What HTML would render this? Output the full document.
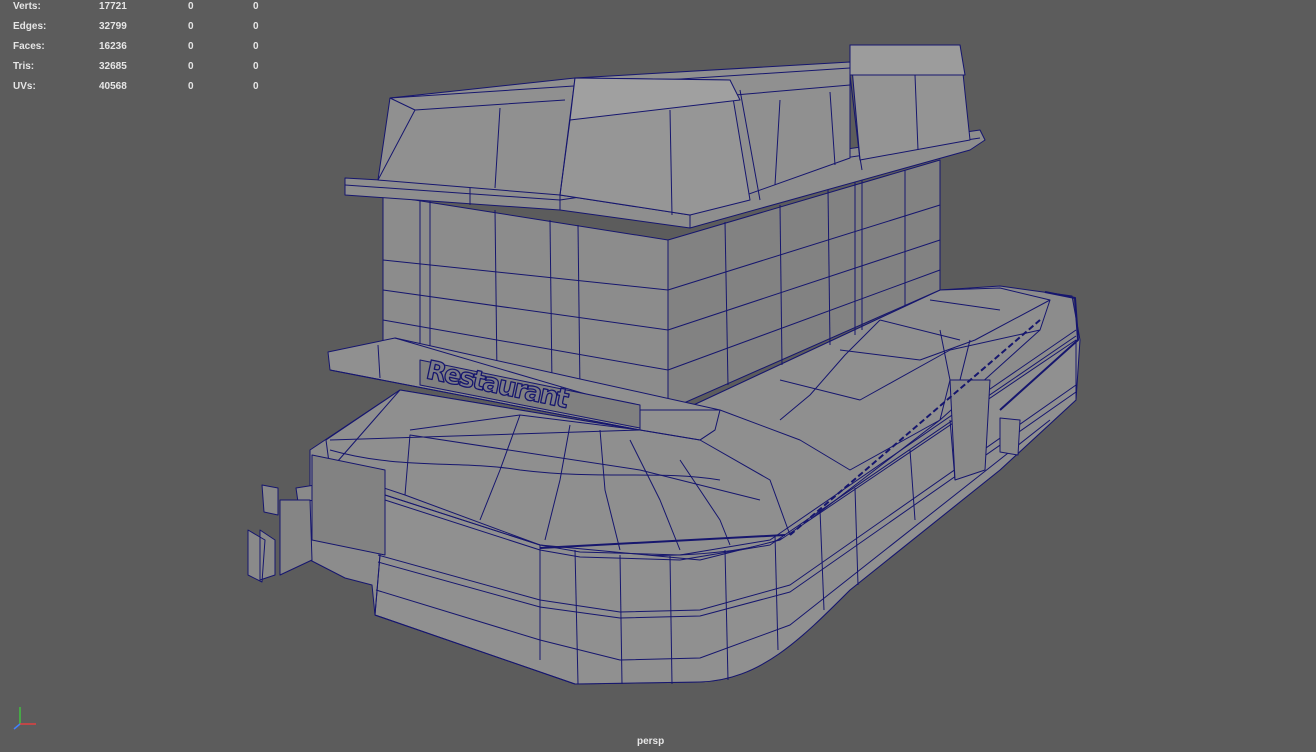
<!DOCTYPE html>
<html><head><meta charset="utf-8"><style>
html,body{margin:0;padding:0;background:#5c5c5c;width:1316px;height:752px;overflow:hidden;font-family:"Liberation Sans",sans-serif}
.st{position:absolute;color:#e6e6e6;font-size:10px;font-weight:bold}
</style></head><body>
<div class="st" style="left:13px;top:1px">Verts:</div><div class="st" style="left:99px;top:1px">17721</div><div class="st" style="left:188px;top:1px">0</div><div class="st" style="left:253px;top:1px">0</div>
<div class="st" style="left:13px;top:21px">Edges:</div><div class="st" style="left:99px;top:21px">32799</div><div class="st" style="left:188px;top:21px">0</div><div class="st" style="left:253px;top:21px">0</div>
<div class="st" style="left:13px;top:41px">Faces:</div><div class="st" style="left:99px;top:41px">16236</div><div class="st" style="left:188px;top:41px">0</div><div class="st" style="left:253px;top:41px">0</div>
<div class="st" style="left:13px;top:61px">Tris:</div><div class="st" style="left:99px;top:61px">32685</div><div class="st" style="left:188px;top:61px">0</div><div class="st" style="left:253px;top:61px">0</div>
<div class="st" style="left:13px;top:81px">UVs:</div><div class="st" style="left:99px;top:81px">40568</div><div class="st" style="left:188px;top:81px">0</div><div class="st" style="left:253px;top:81px">0</div>
<div class="st" style="left:637px;top:736px">persp</div>
<svg width="1316" height="752" style="position:absolute;left:0;top:0" stroke="#16166e" stroke-width="1" stroke-linejoin="round">
<path d="M310,450 L400,390 L640,430 L940,290 L1000,286 L1072,296 L1080,340 L1076,400 L1000,470 L850,590 C800,640 760,680 700,682 L575,684 L375,615 L372,585 L345,578 L310,560 Z" fill="#8c8c8c"/>
<path d="M326,440 L400,390 L640,430 L940,290 L1000,288 L1050,300 L1040,330 L940,420 L790,535 C760,550 700,558 600,555 L540,545 L405,495 L330,470 Z" fill="#8f8f8f"/>
<path d="M385,495 L540,545 L700,560 L780,540 L1076,340 L1076,400 L1000,470 L850,590 C800,640 760,680 700,682 L575,684 L375,615 Z" fill="#909090"/>
<g fill="none">
<path d="M378,555 L540,600 L620,612 L700,610 L790,585 L1076,385"/>
<path d="M378,562 L540,607 L620,618 L700,616 L790,592 L1076,392"/>
<path d="M376,590 L540,640 L620,660 L700,658 L790,625 L1050,420"/>
<path d="M385,495 L540,545 L580,552 L680,555 L770,540 L1076,330"/>
<path d="M385,500 L540,550 L580,557 L680,560 L770,545 L1076,336"/>
<path d="M375,615 L575,684"/><path d="M385,495 L375,615"/>
<path d="M540,545 L540,660"/><path d="M575,550 L578,684"/><path d="M620,555 L622,684"/><path d="M670,556 L672,684"/><path d="M725,550 L728,680"/><path d="M775,535 L778,650"/><path d="M820,510 L824,610"/><path d="M855,488 L858,585"/><path d="M910,450 L915,520"/><path d="M950,420 L955,480"/>
<path d="M405,495 L410,435 L640,470 L760,500"/>
<path d="M330,440 L640,430"/><path d="M400,390 L330,470"/>
<path d="M410,430 L520,415 L560,420 L640,430"/>
<path d="M330,450 C400,470 460,460 520,470 C600,480 660,470 720,480"/>
<path d="M520,415 L500,470 L480,520"/><path d="M570,425 L560,480 L545,540"/><path d="M600,430 L605,490 L620,550"/><path d="M630,440 L660,500 L680,550"/><path d="M680,460 L720,520 L730,545"/>
<path d="M700,440 L770,480 L790,535"/>
<path d="M720,410 L800,440 L850,470 L940,420"/>
<path d="M780,380 L860,400 L950,350 L1040,330"/>
<path d="M840,350 L920,360 L975,340 L1050,300"/>
<path d="M880,320 L960,340"/><path d="M930,300 L1000,310"/>
<path d="M940,330 L950,380 L940,420"/>
<path d="M880,320 L845,355 L810,395 L780,420"/>
<path d="M970,340 L960,380"/>
</g>
<path d="M383,195 L668,240 L668,410 L383,355 Z" fill="#8c8c8c"/>
<path d="M668,240 L940,160 L940,290 L668,410 Z" fill="#828282"/>
<g fill="none">
<path d="M383,260 L668,290 L940,205"/><path d="M383,290 L668,330 L940,240"/><path d="M383,320 L668,370 L940,270"/>
<path d="M420,200 L420,360"/><path d="M430,200 L430,362"/><path d="M495,210 L497,375"/><path d="M550,220 L552,385"/><path d="M578,225 L580,392"/><path d="M725,222 L728,385"/><path d="M780,205 L782,365"/><path d="M828,190 L830,345"/><path d="M855,182 L855,335"/><path d="M862,180 L862,330"/><path d="M905,170 L905,305"/>
</g>
<path d="M328,352 L395,338 L720,410 L715,430 L700,440 L640,430 L330,370 Z" fill="#909090"/>
<path d="M330,370 L640,430 L700,440 L715,430 M395,338 L640,410 L720,410 M640,410 L640,430 M378,345 L380,378" fill="none"/>
<path d="M420,360 L640,405 L640,428 L420,385 Z" fill="#808080"/>
<path d="M345,178 L560,190 L980,130 L985,140 L970,150 L690,228 L560,210 L345,195 Z" fill="#8e8e8e"/>
<path d="M345,185 L560,200 L980,138 M560,190 L560,210 M690,228 L690,215 M470,185 L470,205 M860,158 L862,170" fill="none"/>
<path d="M390,98 L575,78 L850,62 L850,158 L690,215 L560,195 L378,180 Z" fill="#909090"/>
<path d="M390,98 L415,110 L565,100 M415,110 L378,180 M500,108 L495,188 M740,90 L760,200 M780,100 L775,185 M830,92 L835,165 M735,95 L850,85 M390,98 L850,68" fill="none"/>
<path d="M575,78 L730,80 L750,200 L690,215 L560,195 Z" fill="#969696"/>
<path d="M575,78 L730,80 L740,100 L570,120 Z" fill="#a0a0a0"/>
<path d="M670,110 L672,215 M570,120 L560,195" fill="none"/>
<path d="M850,45 L960,45 L970,140 L860,160 Z" fill="#949494"/>
<path d="M850,45 L960,45 L965,75 L850,75 Z" fill="#9c9c9c"/>
<path d="M915,75 L918,150 M860,160 L850,75" fill="none"/>
<text x="425" y="378" transform="rotate(12 425 378)" font-family="'DejaVu Sans',sans-serif" font-weight="bold" font-size="26" fill="#7c7c86" stroke="#16166e" stroke-width="1.3" letter-spacing="-2">Restaurant</text>
<path d="M260,530 L275,540 L275,575 L260,580 Z M248,530 L265,540 L262,582 L248,575 Z" fill="#8a8a8a"/>
<path d="M262,485 L278,488 L278,515 L264,512 Z M296,488 L315,485 L316,500 L298,502 Z" fill="#8a8a8a"/>
<path d="M280,500 L310,500 L312,560 L280,575 Z" fill="#858585"/>
<path d="M312,455 L385,470 L385,555 L312,540 Z" fill="#828282"/>
<path d="M950,380 L990,380 L985,470 L955,480 Z" fill="#898989"/>
<path d="M1000,418 L1020,420 L1018,455 L1000,452 Z" fill="#8c8c8c"/>
<path d="M1045,292 L1075,298 L1078,340 L1000,410" fill="none" stroke-width="2"/>
<path d="M790,535 L1040,320" fill="none" stroke-width="2" stroke-dasharray="6 3"/>
<path d="M540,548 L785,535" fill="none" stroke-width="2"/>
</svg>
<svg width="30" height="30" style="position:absolute;left:10px;top:702px">
<line x1="10" y1="22" x2="10" y2="5" stroke="#40c040" stroke-width="1.5"/>
<line x1="10" y1="22" x2="26" y2="22" stroke="#e04040" stroke-width="1.5"/>
<line x1="10" y1="22" x2="4" y2="27" stroke="#4080ff" stroke-width="1.5"/>
</svg>
</body></html>
